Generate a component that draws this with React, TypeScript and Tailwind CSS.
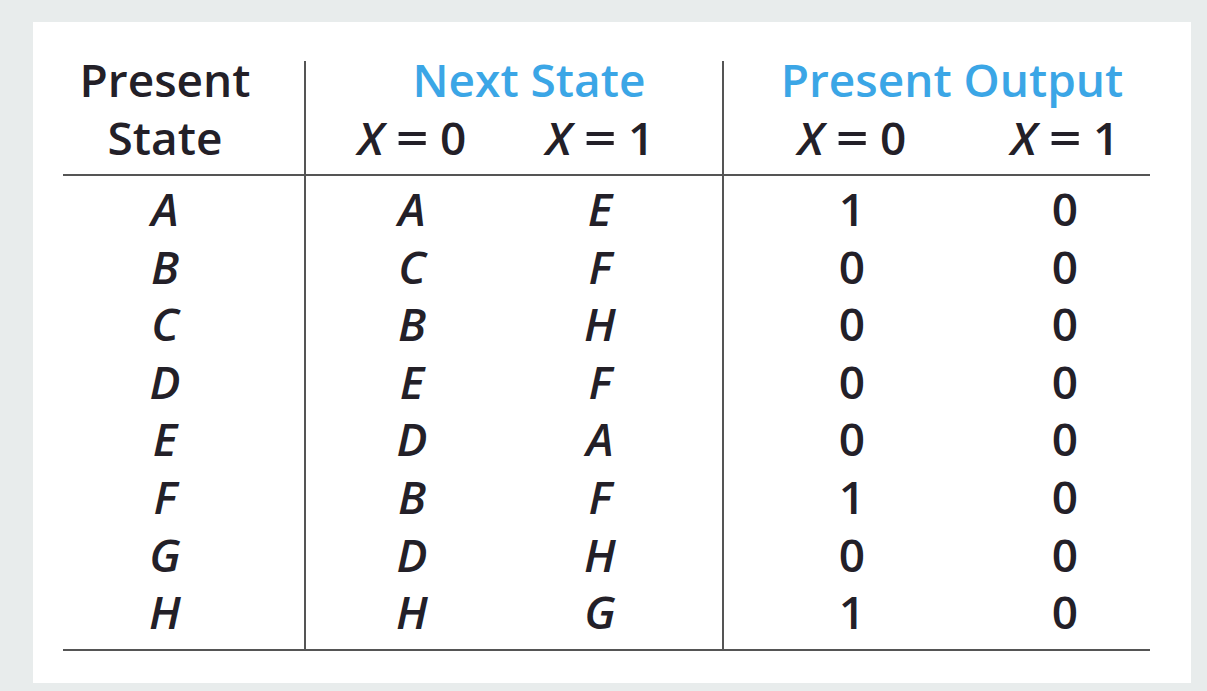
const rows = [
  ['A', 'A', 'E', '1', '0'],
  ['B', 'C', 'F', '0', '0'],
  ['C', 'B', 'H', '0', '0'],
  ['D', 'E', 'F', '0', '0'],
  ['E', 'D', 'A', '0', '0'],
  ['F', 'B', 'F', '1', '0'],
  ['G', 'D', 'H', '0', '0'],
  ['H', 'H', 'G', '1', '0'],
];

function Eq({ v }: { v: string }) {
  return (
    <span className="inline-flex items-baseline gap-[15px]">
      <span className="italic">X</span>
      <span className="scale-x-125">=</span>
      <span>{v}</span>
    </span>
  );
}

export default function App() {
  return (
    <div className="min-h-[691px] w-full bg-[#e8ecec] pt-[22px] pl-[33px] font-['Open_Sans',sans-serif] font-semibold text-[46px] text-[#232028]">
      <div className="w-[1158px] h-[661px] bg-white pt-[39px] pl-[30px]">
        <div className="flex w-[1087px] border-b-2 border-[#555]">
          {/* present state */}
          <div className="w-[241px] flex flex-col text-center">
            <div className="border-b-2 border-[#555] pb-[8px] pr-[37px]">
              <div className="leading-[36px]">Present</div>
              <div className="leading-[58px] mt-[11px]">State</div>
            </div>
            <div className="pt-[4px] pb-[8px] pr-[37px]">
              {rows.map((r, i) => (
                <div key={i} className="leading-[57.6px] italic">{r[0]}</div>
              ))}
            </div>
          </div>

          {/* next state */}
          <div className="w-[418px] flex flex-col border-l-2 border-[#555]">
            <div className="border-b-2 border-[#555] pb-[8px]">
              <div className="leading-[36px] pl-[30px] text-center text-[#3ba6e6]">Next State</div>
              <div className="flex leading-[58px] mt-[11px] pl-[12px]">
                <div className="w-[188px] text-center"><Eq v="0" /></div>
                <div className="w-[188px] text-center"><Eq v="1" /></div>
              </div>
            </div>
            <div className="pt-[4px] pb-[8px] pl-[12px]">
              {rows.map((r, i) => (
                <div key={i} className="flex leading-[57.6px] italic">
                  <div className="w-[188px] text-center">{r[1]}</div>
                  <div className="w-[188px] text-center">{r[2]}</div>
                </div>
              ))}
            </div>
          </div>

          {/* present output */}
          <div className="flex-1 flex flex-col border-l-2 border-[#555]">
            <div className="border-b-2 border-[#555] pb-[8px]">
              <div className="leading-[36px] pl-[30px] text-center text-[#3ba6e6]">Present Output</div>
              <div className="flex leading-[58px] mt-[11px]">
                <div className="w-[256px] text-center"><Eq v="0" /></div>
                <div className="flex-1 text-center"><Eq v="1" /></div>
              </div>
            </div>
            <div className="pt-[4px] pb-[8px]">
              {rows.map((r, i) => (
                <div key={i} className="flex leading-[57.6px]">
                  <div className="w-[256px] text-center">{r[3]}</div>
                  <div className="flex-1 text-center">{r[4]}</div>
                </div>
              ))}
            </div>
          </div>
        </div>
      </div>
    </div>
  );
}
